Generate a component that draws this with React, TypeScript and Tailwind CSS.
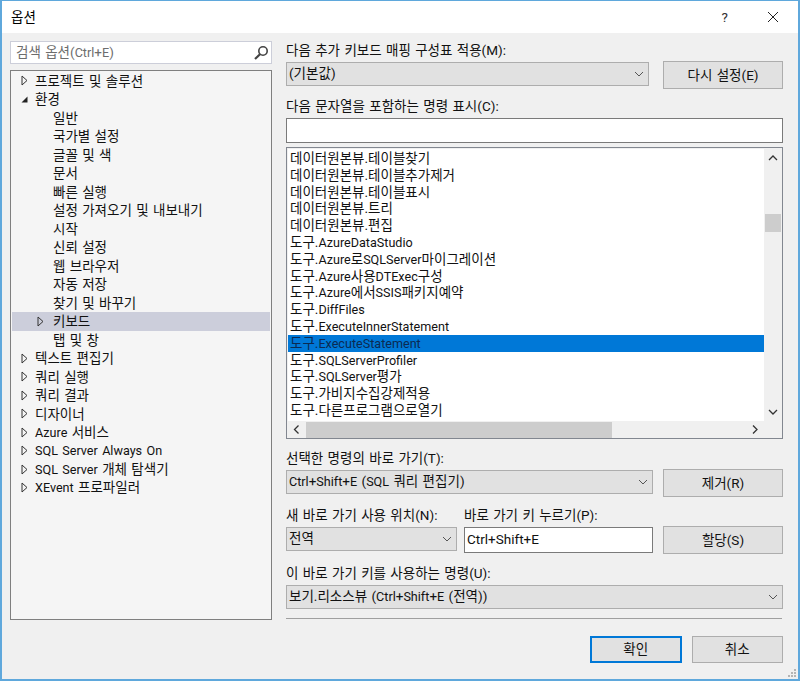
const font = { fontFamily: 'Roboto, "Noto Sans CJK KR", sans-serif', wordSpacing: '1px' };

const treeRows: { label: string; depth: number; arrow?: 'open' | 'closed'; selected?: boolean }[] = [
  { label: '프로젝트 및 솔루션', depth: 0, arrow: 'closed' },
  { label: '환경', depth: 0, arrow: 'open' },
  { label: '일반', depth: 1 },
  { label: '국가별 설정', depth: 1 },
  { label: '글꼴 및 색', depth: 1 },
  { label: '문서', depth: 1 },
  { label: '빠른 실행', depth: 1 },
  { label: '설정 가져오기 및 내보내기', depth: 1 },
  { label: '시작', depth: 1 },
  { label: '신뢰 설정', depth: 1 },
  { label: '웹 브라우저', depth: 1 },
  { label: '자동 저장', depth: 1 },
  { label: '찾기 및 바꾸기', depth: 1 },
  { label: '키보드', depth: 1, arrow: 'closed', selected: true },
  { label: '탭 및 창', depth: 1 },
  { label: '텍스트 편집기', depth: 0, arrow: 'closed' },
  { label: '쿼리 실행', depth: 0, arrow: 'closed' },
  { label: '쿼리 결과', depth: 0, arrow: 'closed' },
  { label: '디자이너', depth: 0, arrow: 'closed' },
  { label: 'Azure 서비스', depth: 0, arrow: 'closed' },
  { label: 'SQL Server Always On', depth: 0, arrow: 'closed' },
  { label: 'SQL Server 개체 탐색기', depth: 0, arrow: 'closed' },
  { label: 'XEvent 프로파일러', depth: 0, arrow: 'closed' },
];

const commands = [
  '데이터원본뷰.테이블찾기',
  '데이터원본뷰.테이블추가제거',
  '데이터원본뷰.테이블표시',
  '데이터원본뷰.트리',
  '데이터원본뷰.편집',
  '도구.AzureDataStudio',
  '도구.Azure로SQLServer마이그레이션',
  '도구.Azure사용DTExec구성',
  '도구.Azure에서SSIS패키지예약',
  '도구.DiffFiles',
  '도구.ExecuteInnerStatement',
  '도구.ExecuteStatement',
  '도구.SQLServerProfiler',
  '도구.SQLServer평가',
  '도구.가비지수집강제적용',
  '도구.다른프로그램으로열기',
];

// latin runs are set a bit smaller than the hangul around them
function Txt({ value }: { value: string }) {
  return (
    <>
      {value.split(/([A-Za-z]+)/).map((part, i) =>
        i % 2 ? <span key={i} className="text-[12.6px]">{part}</span> : part,
      )}
    </>
  );
}

function TreeArrow({ type }: { type: 'open' | 'closed' }) {
  if (type === 'open') {
    return (
      <svg width="9" height="9" viewBox="0 0 9 9">
        <path d="M7.5 1.5V7.5H1.5Z" fill="#222" />
      </svg>
    );
  }
  return (
    <svg width="9" height="11" viewBox="0 0 9 11">
      <path d="M2 1L7 5.5L2 10Z" fill="none" stroke="#333" />
    </svg>
  );
}

function Chevron({ dir, color = '#333' }: { dir: 'up' | 'down' | 'left' | 'right'; color?: string }) {
  const d = {
    up: 'M1 6L5 2L9 6',
    down: 'M1 2L5 6L9 2',
    left: 'M6.5 0.5L2.5 4.5L6.5 8.5',
    right: 'M3 0.5L7 4.5L3 8.5',
  }[dir];
  return (
    <svg width="10" height="9" viewBox="0 0 10 9">
      <path d={d} fill="none" stroke={color} strokeWidth="1.3" />
    </svg>
  );
}

function Combo({ value, className }: { value: string; className: string }) {
  return (
    <div className={`flex items-center justify-between border border-[#adadad] bg-[#e1e1e1] pl-[2px] pr-[4px] ${className}`}>
      <span className="text-[13.5px] leading-none text-[#111]"><Txt value={value} /></span>
      <svg width="10" height="6" viewBox="0 0 10 6">
        <path d="M1 1L5 5L9 1" fill="none" stroke="#555" />
      </svg>
    </div>
  );
}

function Btn({ label, className }: { label: string; className: string }) {
  return (
    <div className={`flex items-center justify-center bg-[#e1e1e1] text-[13.5px] text-[#111] ${className}`}>
      {label}
    </div>
  );
}

function Label({ children, className = '' }: { children: string; className?: string }) {
  return <div className={`text-[13.5px] leading-[18px] text-[#111] ${className}`}>{children}</div>;
}

export default function App() {
  return (
    <div style={font} className="relative flex h-[681px] w-[800px] flex-col overflow-hidden border-b-2 border-l-2 border-r-2 border-t border-[#5fa8dc] bg-[#f0f0f0]">
      <div className="flex h-[32px] shrink-0 items-center justify-between bg-white pl-[9px]">
        <span className="text-[13.5px] text-black">옵션</span>
        <div className="flex items-center">
          <span className="mr-[39px] text-[13.5px] text-[#333]">?</span>
          <svg className="mr-[19px]" width="12" height="12" viewBox="0 0 12 12">
            <path d="M1 1L11 11M11 1L1 11" stroke="#222" strokeWidth="1" />
          </svg>
        </div>
      </div>

      <div className="flex flex-1">
        <div className="ml-[8px] mt-[8px] w-[262px] shrink-0">
          <div className="flex h-[23px] items-center justify-between border border-[#ccced9] bg-white pl-[5px] pr-[2px]">
            <span className="text-[13.5px] text-[#6d6d6d]"><Txt value="검색 옵션(Ctrl+E)" /></span>
            <svg width="16" height="16" viewBox="0 0 16 16">
              <circle cx="10" cy="6" r="4.2" fill="none" stroke="#444" strokeWidth="1.6" />
              <path d="M7 9.2L2 14" stroke="#444" strokeWidth="2.2" />
            </svg>
          </div>
          <div className="mt-[6px] h-[550px] border border-[#7f7f7f] bg-[#f5f5f5] px-px pt-[0.6px]">
            {treeRows.map((row) => (
              <div
                key={row.label}
                className={`flex h-[18.5px] items-center text-[13.5px] text-[#111] ${row.selected ? 'bg-[#cccedb]' : ''} ${row.depth ? 'pl-[24px]' : 'pl-[8px]'}`}
              >
                <span className="flex w-[9px] justify-center">{row.arrow && <TreeArrow type={row.arrow} />}</span>
                <span className={row.depth ? 'ml-[8px]' : 'ml-[6px]'}><Txt value={row.label} /></span>
              </div>
            ))}
          </div>
        </div>

        <div className="ml-[14px] w-[497px] shrink-0">
          <Label className="mt-[8px]">다음 추가 키보드 매핑 구성표 적용(M):</Label>
          <div className="mt-[2px] flex items-start">
            <Combo value="(기본값)" className="mt-[1px] h-[24px] w-[363px]" />
            <Btn label="다시 설정(E)" className="ml-[14px] h-[28px] w-[120px] border border-[#adadad]" />
          </div>
          <Label className="mt-[8px]">다음 문자열을 포함하는 명령 표시(C):</Label>
          <div className="mt-[3px] h-[25px] border border-[#7a7a7a] bg-white" />
          <div className="mt-[4px] h-[292px] border border-[#828790] bg-[#f0f0f0] p-px">
            <div className="flex h-[272px]">
              <div className="w-[476px] overflow-hidden bg-white pt-[1px]">
                {commands.map((c) => (
                  <div
                    key={c}
                    className={`h-[16.8px] whitespace-nowrap pl-[2px] text-[13.5px] leading-[16.8px] ${c === '도구.ExecuteStatement' ? 'bg-[#0078d7] text-[#0b2a52]' : 'text-[#111]'}`}
                  >
                    <Txt value={c} />
                  </div>
                ))}
              </div>
              <div className="flex w-[17px] flex-col items-center bg-[#f0f0f0] pt-[5px]">
                <Chevron dir="up" />
                <div className="mt-[51px] h-[18px] w-[16px] bg-[#cdcdcd]" />
                <div className="flex-1" />
                <div className="mb-[4px]"><Chevron dir="down" /></div>
              </div>
            </div>
            <div className="flex h-[17px] items-center">
              <div className="flex w-[18px] justify-center"><Chevron dir="left" /></div>
              <div className="h-[16px] w-[306px] bg-[#cdcdcd]" />
              <div className="ml-[138px]"><Chevron dir="right" /></div>
            </div>
          </div>

          <Label className="mt-[10px]">선택한 명령의 바로 가기(T):</Label>
          <div className="mt-[2px] flex items-start">
            <Combo value="Ctrl+Shift+E (SQL 쿼리 편집기)" className="mt-[1px] h-[24px] w-[367px]" />
            <Btn label="제거(R)" className="ml-[10px] h-[28px] w-[120px] border border-[#adadad]" />
          </div>
          <div className="mt-[9px] flex h-[18px]">
            <Label className="w-[178px]">새 바로 가기 사용 위치(N):</Label>
            <Label>바로 가기 키 누르기(P):</Label>
          </div>
          <div className="mt-[2px] flex items-start">
            <Combo value="전역" className="mt-[1px] h-[24px] w-[171px]" />
            <div className="ml-[7px] mt-[1px] flex h-[26px] w-[189px] items-center border border-[#7a7a7a] bg-white pb-[2px] pl-[2px] text-[13.5px] text-[#111]">Ctrl+Shift+E</div>
            <Btn label="할당(S)" className="ml-[10px] h-[28px] w-[120px] border border-[#adadad]" />
          </div>
          <Label className="mt-[10px]">이 바로 가기 키를 사용하는 명령(U):</Label>
          <Combo value="보기.리소스뷰 (Ctrl+Shift+E (전역))" className="mt-[3px] h-[24px] w-[497px]" />
          <div className="mt-[9px] h-px w-[496px] bg-[#a0a0a0]" />
          <div className="mt-[17px] flex">
            <Btn label="확인" className="ml-[304px] h-[27px] w-[93px] border-2 border-[#0078d7]" />
            <Btn label="취소" className="ml-[10px] h-[27px] w-[93px] border border-[#adadad]" />
          </div>
        </div>
      </div>

      {/* resize grip */}
      <svg className="absolute bottom-[1px] right-[1px]" width="10" height="10" viewBox="0 0 10 10" fill="#b4b4b4">
        <rect x="7" y="1" width="2" height="2" />
        <rect x="4" y="4" width="2" height="2" />
        <rect x="7" y="4" width="2" height="2" />
        <rect x="1" y="7" width="2" height="2" />
        <rect x="4" y="7" width="2" height="2" />
        <rect x="7" y="7" width="2" height="2" />
      </svg>
    </div>
  );
}
